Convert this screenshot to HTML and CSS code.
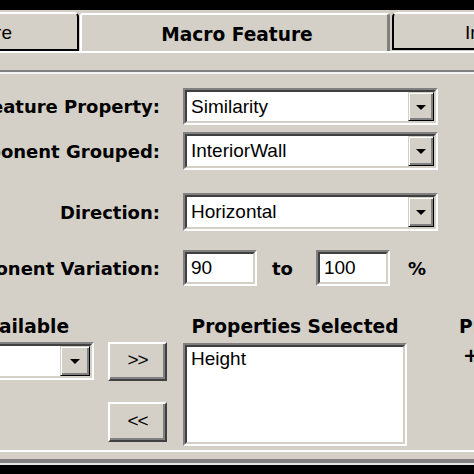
FILE: index.html
```html
<!DOCTYPE html>
<html>
<head>
<meta charset="utf-8">
<link rel="stylesheet" href="styles.css">
</head>
<body>
<div class="window">
  <div class="titlebar"></div>
  <div class="tabstrip">
    <div class="tab tab-left"><span>Micro Feature</span></div>
    <div class="tab tab-sel"><span class="bold">Macro Feature</span></div>
    <div class="tab tab-right"><span>Interaction</span></div>
  </div>
  <div class="sep"></div>

  <div class="row r1">
    <div class="label"><span class="bold">Feature Property:</span></div>
    <div class="combo"><div class="field"><span class="val">Similarity</span><span class="ddbtn"><i class="arrow"></i></span></div></div>
  </div>
  <div class="row r2">
    <div class="label"><span class="bold">Component Grouped:</span></div>
    <div class="combo"><div class="field"><span class="val">InteriorWall</span><span class="ddbtn"><i class="arrow"></i></span></div></div>
  </div>
  <div class="row r3">
    <div class="label"><span class="bold">Direction:</span></div>
    <div class="combo"><div class="field"><span class="val">Horizontal</span><span class="ddbtn"><i class="arrow"></i></span></div></div>
  </div>
  <div class="row r4">
    <div class="label"><span class="bold">Component Variation:</span></div>
    <div class="edit"><div class="field"><span class="val">90</span></div></div>
    <span class="bold to">to</span>
    <div class="edit edit2"><div class="field"><span class="val">100</span></div></div>
    <span class="bold pct">%</span>
  </div>

  <div class="lists">
    <div class="col col-avail">
      <div class="hdr bold">Properties Available</div>
      <div class="combo combo-avail"><div class="field"><span class="val"></span><span class="ddbtn ddbtn-wide"><i class="arrow"></i></span></div></div>
    </div>
    <div class="col col-btns">
      <div class="btn">&gt;&gt;</div>
      <div class="btn btn2">&lt;&lt;</div>
    </div>
    <div class="col col-sel">
      <div class="hdr bold">Properties Selected</div>
      <div class="listbox"><div class="field"><div class="item">Height</div></div></div>
    </div>
    <div class="col col-pri">
      <div class="hdr hdr-left bold">Priority</div>
      <div class="plus bold">+</div>
    </div>
  </div>

  <div class="panel-edge"></div>
  <div class="frame"></div>
</div>
</body>
</html>
```

FILE: styles.css
```css
html, body {
  margin: 0;
  padding: 0;
  background: #d4d0c8;
}

.window {
  width: 474px;
  height: 474px;
  overflow: hidden;
  background: #d4d0c8;
  font-family: "Liberation Sans", Arial, sans-serif;
  font-size: 19px;
  color: #000;
}

.bold {
  font-family: "DejaVu Sans", sans-serif;
  font-weight: bold;
  font-size: 18px;
}

.titlebar {
  height: 10px;
  background: #000;
}

/* tabs */
.tabstrip {
  display: flex;
  height: 41px;
  border-bottom: 2px solid #fff;
}

.tab {
  box-sizing: border-box;
  display: flex;
  align-items: center;
  white-space: nowrap;
  flex: none;
  padding-top: 3px;
}

.tab-left {
  width: 79px;
  margin-top: 2px;
  height: 39px;
  border-top: 2px solid #fff;
  border-right: 2px solid #000;
  border-bottom: 2px solid #000;
  border-top-right-radius: 5px;
  justify-content: flex-end;
  padding-right: 65px;
}

.tab-sel {
  width: 310px;
  margin-left: 1px;
  margin-top: 3px;
  height: 38px;
  border-top: 2px solid #fff;
  border-left: 2px solid #fff;
  border-right: 3px solid #808080;
  border-top-left-radius: 3px;
  border-top-right-radius: 3px;
  justify-content: center;
}

.tab-sel .bold {
  font-size: 18.6px;
  margin-left: 5px;
}

.tab-right {
  width: 120px;
  margin-left: 2px;
  margin-top: 2px;
  height: 38px;
  border-top: 2px solid #fff;
  border-left: 2px solid #000;
  border-bottom: 2px solid #000;
  border-top-left-radius: 5px;
  padding-left: 71px;
}

.sep {
  margin-top: 17px;
  border-top: 2px solid #808080;
  border-bottom: 2px solid #f4f4f4;
}

/* form rows */
.row {
  display: flex;
  align-items: center;
}

.r1 { margin-top: 14px; height: 37px; }
.r2 { margin-top: 7px; height: 38px; }
.r3 { margin-top: 23px; height: 38px; }
.r4 { margin-top: 19px; height: 36px; }

.label {
  width: 160px;
  flex: none;
  display: flex;
  justify-content: flex-end;
  white-space: nowrap;
}

.combo, .edit, .listbox {
  box-sizing: border-box;
  border: 2px solid;
  border-color: #808080 #fff #fff #808080;
  flex: none;
}

.combo {
  margin-left: 23px;
  width: 255px;
  height: 100%;
}

.field {
  box-sizing: border-box;
  height: 100%;
  border: 2px solid;
  border-color: #404040 #d4d0c8 #d4d0c8 #404040;
  background: #fff;
  display: flex;
  align-items: center;
}

.val {
  flex: 1;
  padding-left: 4px;
  white-space: nowrap;
}

.ddbtn {
  align-self: stretch;
  width: 26px;
  flex: none;
  box-sizing: border-box;
  background: #d4d0c8;
  border: 1px solid;
  border-color: #d4d0c8 #000 #000 #d4d0c8;
  box-shadow: inset 1px 1px 0 #fff, inset -2px -2px 0 #808080;
  display: flex;
  align-items: center;
  justify-content: center;
}

.ddbtn-wide {
  width: 30px;
}

.arrow {
  width: 0;
  height: 0;
  border-left: 5px solid transparent;
  border-right: 5px solid transparent;
  border-top: 5px solid #000;
  margin-top: 1px;
}

.edit {
  margin-left: 23px;
  width: 74px;
  height: 100%;
}

.edit2 {
  margin-left: 23px;
}

.to {
  margin-left: 15px;
}

.pct {
  margin-left: 18px;
}

/* lists section */
.lists {
  display: flex;
  align-items: flex-start;
  margin-top: 31px;
  height: 129px;
}

.col {
  flex: none;
  display: flex;
  flex-direction: column;
}

.hdr {
  height: 20px;
  line-height: 20px;
  font-size: 18.6px;
  white-space: nowrap;
  display: flex;
  justify-content: center;
}

.hdr-left {
  justify-content: flex-start;
}

.col-avail {
  width: 262px;
  margin-left: -168px;
}

.combo-avail {
  margin-left: 0;
  margin-top: 5px;
  width: 262px;
  height: 38px;
}

.col-btns {
  width: 59px;
  margin-left: 14px;
  padding-top: 25px;
}

.btn {
  box-sizing: border-box;
  height: 39px;
  border: 2px solid;
  border-color: #fff #404040 #404040 #fff;
  box-shadow: inset -2px -2px 0 #808080;
  display: flex;
  align-items: center;
  justify-content: center;
  padding-bottom: 3px;
  letter-spacing: -1px;
}

.btn2 {
  margin-top: 21px;
  height: 40px;
}

.col-sel {
  width: 224px;
  margin-left: 16px;
}

.listbox {
  margin-top: 6px;
  width: 224px;
  height: 103px;
}

.listbox .field {
  align-items: flex-start;
  flex-direction: column;
}

.item {
  padding: 1px 0 0 4px;
}

.col-pri {
  margin-left: 52px;
}

.plus {
  margin-top: 8px;
  margin-left: 4px;
  font-size: 19px;
  line-height: 20px;
}

/* bottom frame */
.panel-edge {
  margin-top: 4px;
  border-top: 2px solid #fff;
  height: 7px;
  border-bottom: 4px solid #808080;
}

.frame {
  border-top: 2px solid #e4e4e4;
  height: 20px;
  background: #000;
}
```
